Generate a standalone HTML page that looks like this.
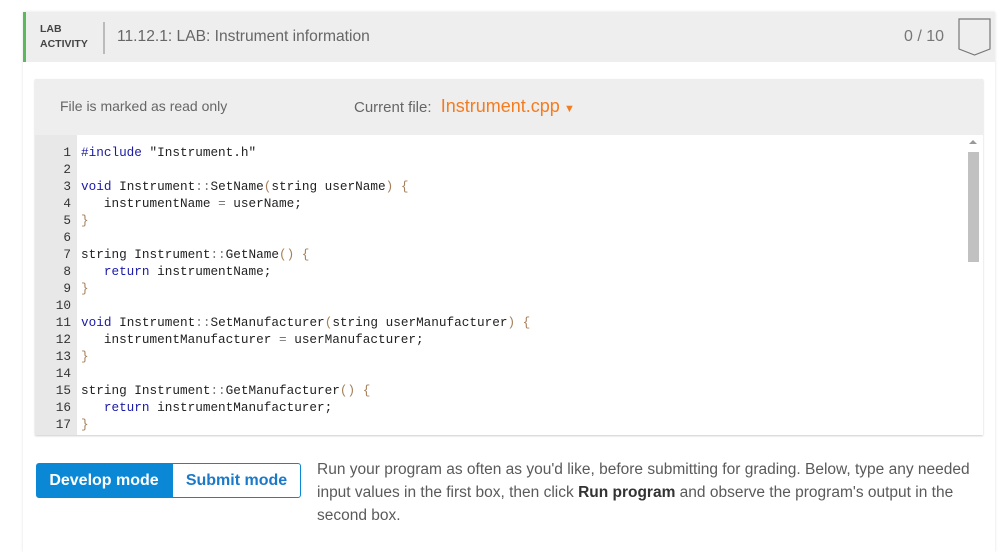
<!DOCTYPE html>
<html><head><style>
body{margin:0;background:#fff;width:1005px;height:536px;overflow:hidden;font-family:"Liberation Sans",sans-serif;position:relative}
.card{position:absolute;left:23px;top:12px;width:972px;height:540px;background:#fff;box-shadow:0 0 3px rgba(0,0,0,.12)}
.hdr{position:absolute;left:0;top:0;width:972px;height:50px;background:#eee;border-left:3px solid #5cb85c;box-sizing:border-box}
.lab{position:absolute;left:14px;top:10px;font-size:10.5px;font-weight:bold;color:#444;line-height:15px}
.sep{position:absolute;left:77px;top:10px;width:2px;height:32px;background:#bbb}
.title{position:absolute;left:91px;top:16px;font-size:15.6px;color:#666}
.score{position:absolute;left:878px;top:16px;font-size:16px;color:#777}
.badge{position:absolute;left:931px;top:5px}
.ed{position:absolute;left:12px;top:67px;width:948px;height:356px;background:#eee;box-shadow:0 1px 2px rgba(0,0,0,.2)}
.ro{position:absolute;left:25px;top:19px;font-size:14px;color:#666}
.cf{position:absolute;left:319px;top:17px;font-size:15px;color:#666}
.cf b{color:#f47c20;font-weight:normal;font-size:18px;margin-left:5px}
.code{position:absolute;left:0;top:56px;width:948px;height:300px;background:#fff}
.gut{position:absolute;left:0;top:0;width:42px;height:300px;background:#e8e8e8}
pre{margin:0;position:absolute;top:9px;font-family:"Liberation Mono",monospace;font-size:12.7px;line-height:17px;color:#222}
.ln{left:0;width:36px;text-align:right;color:#333}
.src{left:46px}
.k{color:#1a1aa6}.p{color:#a67f59}.o{color:#777}
.sb{position:absolute;left:931px;top:0;width:15px;height:300px;background:#fff}
.th{position:absolute;left:2px;top:17px;width:11px;height:110px;background:#c1c1c1}
.btn{position:absolute;top:463px;height:35px;box-sizing:border-box;font-size:16px;font-weight:bold;line-height:33px;text-align:center}
.dev{left:36px;width:136px;background:#0a88d6;color:#fff;border:1px solid #0a88d6;border-radius:3px 0 0 3px}
.sub{left:172px;width:129px;color:#1a7ac9;border:1px solid #0a88d6;border-radius:0 3px 3px 0;background:#fff}
.txt{position:absolute;left:317px;top:458px;width:668px;font-size:15.5px;line-height:23px;color:#5a5a5a}
.txt b{color:#333}
</style></head><body>
<div class="card">
 <div class="hdr">
  <div class="lab">LAB<br>ACTIVITY</div>
  <div class="sep"></div>
  <div class="title">11.12.1: LAB: Instrument information</div>
  <div class="score">0 / 10</div>
  <svg class="badge" width="34" height="40"><path d="M2 2H33V32L17.5 38L2 32Z" fill="none" stroke="#777" stroke-width="1.2"/></svg>
 </div>
 <div class="ed">
  <div class="ro">File is marked as read only</div>
  <div class="cf">Current file: <b>Instrument.cpp</b> <span style="color:#f47c20;font-size:11px">▼</span></div>
  <div class="code">
   <div class="gut"></div>
<pre class="ln">1
2
3
4
5
6
7
8
9
10
11
12
13
14
15
16
17</pre>
<pre class="src"><span class="k">#include</span> "Instrument.h"

<span class="k">void</span> Instrument<span class="o">::</span>SetName<span class="p">(</span>string userName<span class="p">) {</span>
   instrumentName <span class="o">=</span> userName;
<span class="p">}</span>

string Instrument<span class="o">::</span>GetName<span class="p">() {</span>
   <span class="k">return</span> instrumentName;
<span class="p">}</span>

<span class="k">void</span> Instrument<span class="o">::</span>SetManufacturer<span class="p">(</span>string userManufacturer<span class="p">) {</span>
   instrumentManufacturer <span class="o">=</span> userManufacturer;
<span class="p">}</span>

string Instrument<span class="o">::</span>GetManufacturer<span class="p">() {</span>
   <span class="k">return</span> instrumentManufacturer;
<span class="p">}</span></pre>
   <div class="sb"><div style="position:absolute;left:3px;top:5px;width:0;height:0;border-left:4px solid transparent;border-right:4px solid transparent;border-bottom:4px solid #999"></div><div class="th"></div></div>
  </div>
 </div>
</div>
<div class="btn dev">Develop mode</div>
<div class="btn sub">Submit mode</div>
<div class="txt">Run your program as often as you'd like, before submitting for grading. Below, type any needed input values in the first box, then click <b>Run program</b> and observe the program's output in the second box.</div>
</body></html>
